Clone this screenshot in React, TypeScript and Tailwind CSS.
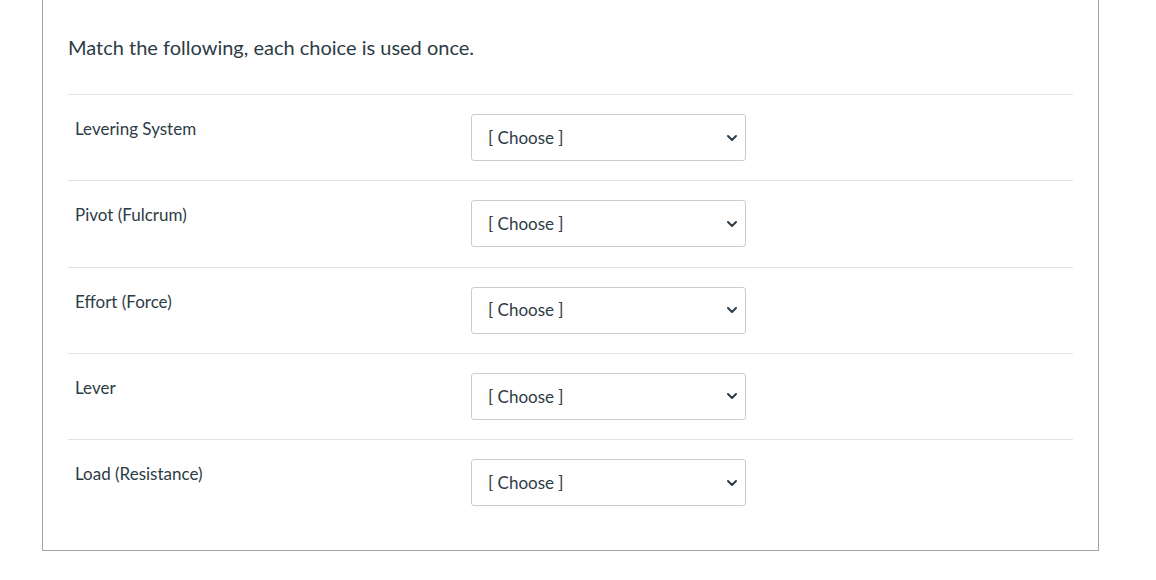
import { ChevronDown } from "lucide-react";

const items = ["Levering System", "Pivot (Fulcrum)", "Effort (Force)", "Lever", "Load (Resistance)"];

function ChooseBox() {
  return (
    <div className="flex h-[47px] w-[275px] items-center justify-between rounded-[3px] border border-[#c7cdd1] bg-white pl-4 pr-[5px]">
      <span className="text-[17px] text-[#2d3b45]">[ Choose ]</span>
      <ChevronDown size={16} strokeWidth={3} className="text-[#2d3b45]" />
    </div>
  );
}

export default function App() {
  return (
    <div className="h-[580px] w-[1156px] bg-white font-['Lato',sans-serif]">
      <div className="ml-[42px] w-[1057px] border border-t-0 border-[#a5a5a5] px-[25px] pb-[25px] pt-[33px]">
        <p className="text-[20px] leading-[28px] text-[#2d3b45]">Match the following, each choice is used once.</p>
        <div className="mt-[33px]">
          {items.map((label) => (
            <div key={label} className="grid h-[86.25px] grid-cols-[403px_1fr] border-t border-[#e1e4e6] pt-[19px]">
              <div className="pl-[7px] pt-[3px] text-[17px] leading-[24px] text-[#2d3b45]">{label}</div>
              <ChooseBox />
            </div>
          ))}
        </div>
      </div>
    </div>
  );
}
